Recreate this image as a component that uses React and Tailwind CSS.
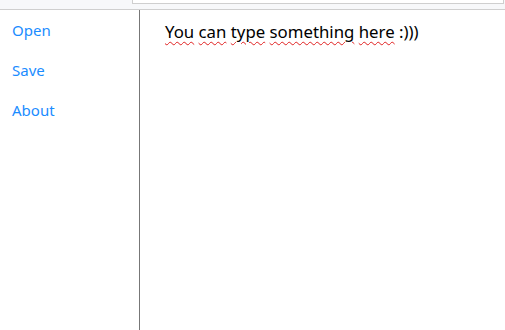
export default function App() {
  const links = ["Open", "Save", "About"];
  const words = ["You", "can", "type", "something", "here"];

  return (
    <div className="h-[330px] w-[505px] flex flex-col bg-white overflow-hidden font-['Noto_Sans',sans-serif]">
      {/* browser strip */}
      <div className="h-[10px] shrink-0 bg-[#f7f8fa] border-b border-[#cfcfcf] flex">
        <div className="w-[132px]" />
        <div className="flex-1 h-[4px] border-l border-b border-r border-[#cfcfcf] bg-white mr-[1px]" />
      </div>

      <div className="flex flex-1">
        <nav className="w-[140px] shrink-0 border-r border-[#777] flex flex-col pl-[12px] pt-[10px]">
          {links.map((l) => (
            <a
              key={l}
              href="#"
              className="h-[40px] text-[15px] leading-[20px] text-[#1a8cff]"
            >
              {l}
            </a>
          ))}
        </nav>

        <div className="flex-1 pl-[25px] pt-[11px] text-[16.8px] leading-[22px] text-black">
          {words.map((w) => (
            <span key={w}>
              <span className="underline decoration-wavy decoration-[#e02020] decoration-1 underline-offset-[3px]">
                {w}
              </span>{" "}
            </span>
          ))}
          :)))
        </div>
      </div>
    </div>
  );
}
